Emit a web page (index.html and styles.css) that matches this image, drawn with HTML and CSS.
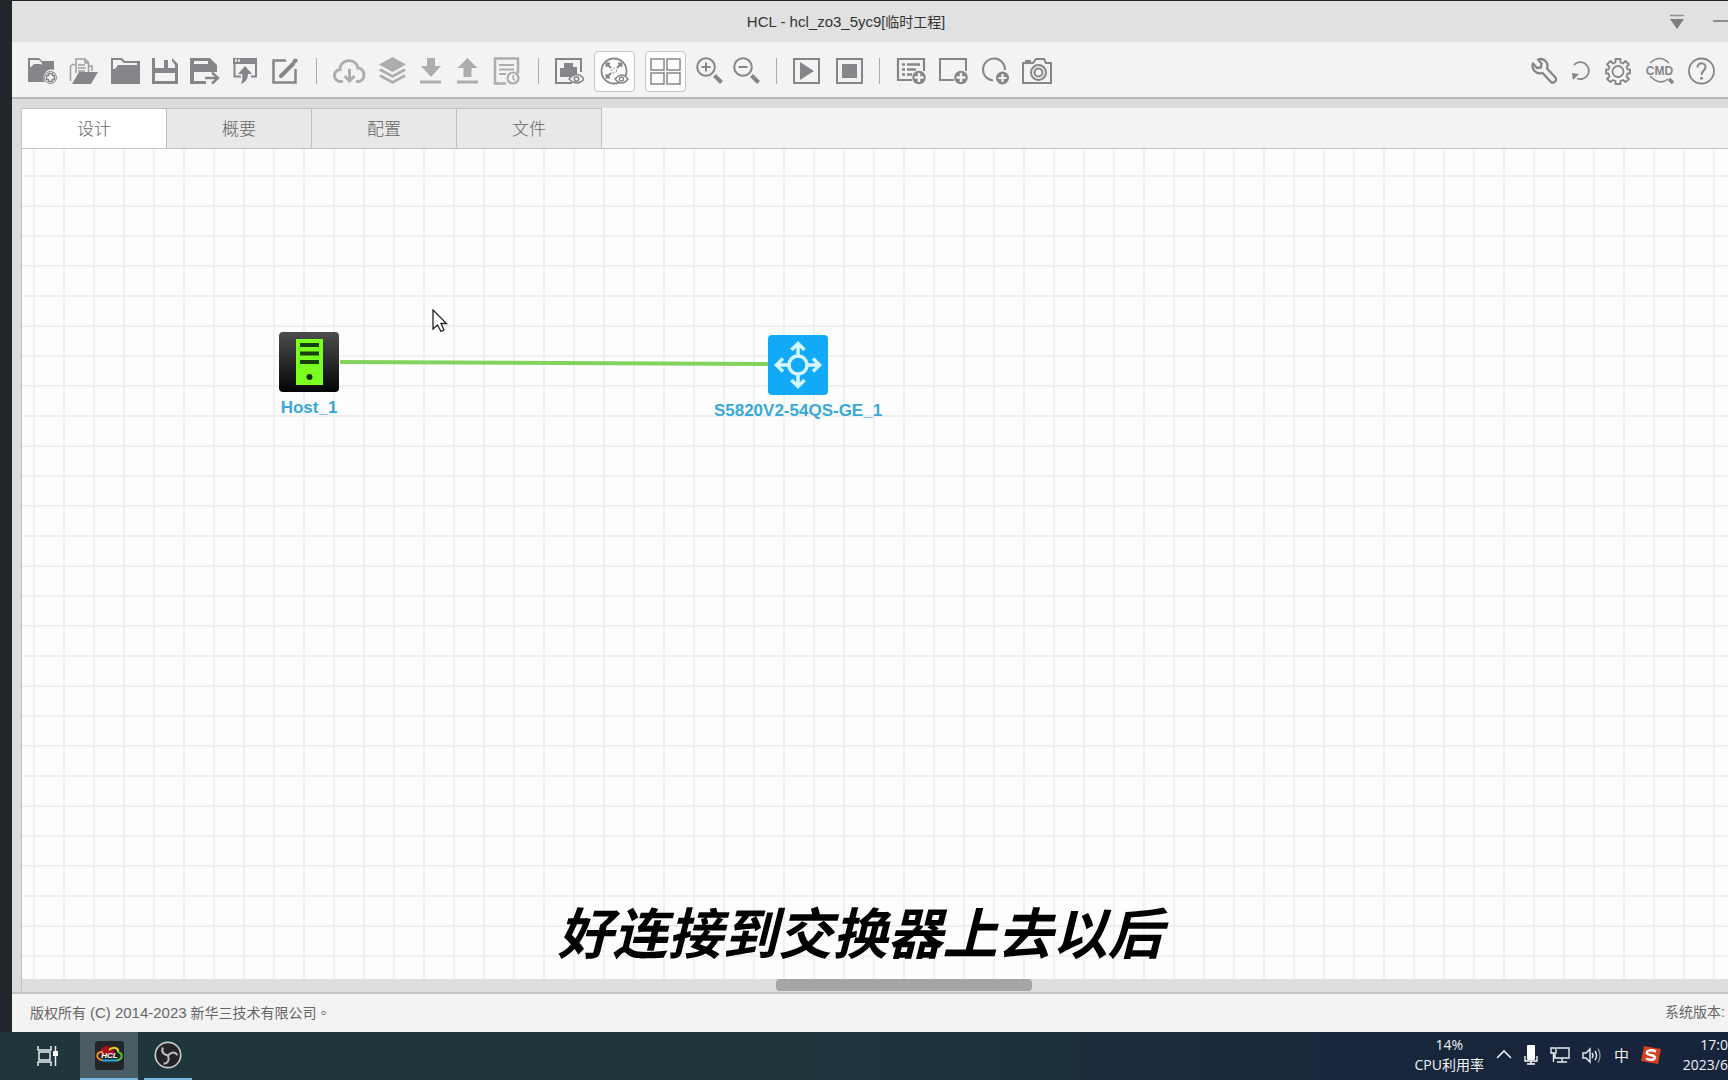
FILE: index.html
```html
<!DOCTYPE html>
<html lang="zh-CN">
<head>
<meta charset="utf-8">
<title>HCL - hcl_zo3_5yc9[临时工程]</title>
<link rel="stylesheet" href="styles.css">
</head>
<body>
<div class="desktop">
<div class="window">
  <header class="titlebar">
    <h1 class="title">HCL - hcl_zo3_5yc9<span class="cjk">[临时工程]</span></h1>
    <div class="window-controls">
      <button aria-label="菜单"><svg width="16" height="16"><path d="M1 1.5h14" stroke="#929397" stroke-width="1.5"/><path d="M1 5h14L8 15z" fill="#7c7d82"/></svg></button>
      <button aria-label="最小化"><svg width="15" height="16"><path d="M0 7h15" stroke="#8c8d90" stroke-width="2"/></svg></button>
    </div>
  </header>

  <div class="toolbar">
    <div class="group g-file">
      <button aria-label="新建工程"><svg width="29" height="28"><path fill="currentColor" d="M0 1h11l3 3h12v9a8 8 0 0 0-9 12H0z"/><path d="M2 7V3h9l3 3v1.500l-2-.5H6L3 10H2z" fill="#f3f3f3"/><circle cx="22.500" cy="20.500" r="6" fill="#f3f3f3" stroke="currentColor"/><path d="M20.500 16.500h4v2h2v4h-2v2h-4v-2h-2v-4h2z" fill="none" stroke="currentColor" stroke-width="1.500"/></svg></button>
      <button aria-label="打开工程"><svg width="30" height="28"><path d="M1.500 24V9l2-1.500H6M7 16V2h9l3.500 3.500V15M16 2v4h3.500M20 9h3v5M9 8h7M9 11h8M9 14h7" fill="none" stroke="#9b9da1" stroke-width="1.500"/><path d="M10 15h19l-7 12H3z" fill="currentColor"/></svg></button>
      <button aria-label="工程列表"><svg width="29" height="28"><path fill="currentColor" d="M0 1h11l3 3h15v23H0z"/><path d="M2 12V3h8l3 3h13v2H7l-3 4z" fill="#f3f3f3"/></svg></button>
      <button aria-label="保存"><svg width="26" height="28"><path fill="currentColor" fill-rule="evenodd" d="M0 1h3v12h20V8l-3-4V1l6 6v20H0zM3 16v8h20v-8z"/><path fill="currentColor" d="M12 3h4v8h-4zM3 11h20v3H3z"/></svg></button>
      <button aria-label="另存为"><svg width="30" height="28"><path fill="currentColor" fill-rule="evenodd" d="M0 1h20l7 7v7H4v9h12v3H0zM4 4v3h14V4z"/><path d="M15 21h12M22 15.500l6 5.500-6 5.500" fill="none" stroke="currentColor" stroke-width="2.500"/></svg></button>
      <button aria-label="导出"><svg width="27" height="28"><path d="M2.500 6v13.500H9M19 19.500h5V6" fill="none" stroke="currentColor" stroke-width="2"/><path fill="currentColor" d="M1 1h24v6H1zM13 9l7 8h-4c0 6-3 8-7 10 1-3 2-6 1-10H6z"/><path d="M4 2v3M7 2v3" stroke="#f3f3f3" stroke-width="1.500"/></svg></button>
      <button aria-label="编辑"><svg width="27" height="28"><path d="M15 3.500H2.500v22h22V12" fill="none" stroke="currentColor" stroke-width="2.500"/><path d="M10 19L22 7" stroke="currentColor" stroke-width="4" stroke-linecap="round"/><path d="M23.500 4.500l1-1" stroke="currentColor" stroke-width="4" stroke-linecap="round"/></svg></button>
    </div>
    <span class="sep"></span>
    <div class="group g-cloud">
      <button aria-label="云端下载"><svg width="33" height="28"><path d="M10 24.500H8a6 6 0 0 1-1-12C7 2 22 0 25 11c8 1 8 13 0 13.500h-2" fill="none" stroke="currentColor" stroke-width="3"/><path d="M16.500 12v12M11.500 19l5 5 5-5" fill="none" stroke="currentColor" stroke-width="3"/></svg></button>
      <button aria-label="图层"><svg width="27" height="28"><path d="M13.500 0L27 7.500 13.500 15 0 7.500z" fill="currentColor"/><path d="M1 12.500l12.500 7 12.500-7M1 18.500l12.500 7 12.500-7" fill="none" stroke="currentColor" stroke-width="2.800"/></svg></button>
      <button aria-label="导入"><svg width="24" height="28"><path d="M8 1h8v8h6l-10 11L2 9h6z" fill="currentColor"/><path d="M1 25h21" stroke="currentColor" stroke-width="3"/></svg></button>
      <button aria-label="上传"><svg width="24" height="28"><path d="M11.500 1l10 10h-6v9h-8v-9h-6z" fill="currentColor"/><path d="M1 25h21" stroke="currentColor" stroke-width="3"/></svg></button>
      <button aria-label="日志"><svg width="27" height="28"><path d="M13 26.500H2v-25h23v15" fill="none" stroke="currentColor" stroke-width="2.500"/><path d="M6 8h15M6 12.500h15M6 17h7" stroke="currentColor" stroke-width="2"/><circle cx="20" cy="21" r="5.500" fill="#f3f3f3" stroke="currentColor" stroke-width="2.200"/><path d="M20 18v3.500l2 2" fill="none" stroke="currentColor" stroke-width="1.500"/></svg></button>
    </div>
    <span class="sep"></span>
    <div class="group g-view">
      <button aria-label="显示接口"><svg width="29" height="28"><path d="M26 15V2H1v24h16" fill="none" stroke="currentColor" stroke-width="2"/><path d="M9 6h9v4h4v8l-6 2H5V11h4z" fill="currentColor"/><path d="M14 22q8-9 15 0q-7 8-15 0z" fill="#f3f3f3" stroke="currentColor" stroke-width="1.600"/><circle cx="21.500" cy="22" r="2.200" fill="none" stroke="currentColor" stroke-width="1.500"/></svg></button>
      <button class="toggle" aria-label="显示设备"><svg width="29" height="28"><circle cx="14" cy="14" r="12.500" fill="none" stroke="currentColor" stroke-width="1.800"/><path d="M11 11L7 7M17 11l4-4M11 16l-4 4M6.500 10V6.500H10M18 6.500h3.500V10M6.500 17v3.500H10" fill="none" stroke="currentColor" stroke-width="1.800"/><circle cx="14" cy="13.500" r="2.500" fill="none" stroke="currentColor" stroke-dasharray="2 1.500"/><path d="M15 22q7-8 13 0q-6 8-13 0z" fill="#fff" stroke="currentColor" stroke-width="1.500"/><circle cx="21.500" cy="22" r="2" fill="none" stroke="currentColor" stroke-width="1.300"/></svg></button>
      <button class="toggle" aria-label="显示网格"><svg width="31" height="28"><path d="M1 2h13v11H1zM17 2h13v11H17zM1 16h13v11H1zM17 16h13v11H17z" fill="none" stroke="currentColor" stroke-width="1.500"/></svg></button>
      <button aria-label="放大"><svg width="27" height="28"><circle cx="10" cy="10" r="8.800" fill="none" stroke="currentColor" stroke-width="2"/><path d="M5.500 10h9M10 5.500v9" stroke="currentColor" stroke-width="2"/><path d="M18.500 18.500l7 7" stroke="currentColor" stroke-width="4"/></svg></button>
      <button aria-label="缩小"><svg width="27" height="28"><circle cx="10" cy="10" r="8.800" fill="none" stroke="currentColor" stroke-width="2"/><path d="M5.500 10h9" stroke="currentColor" stroke-width="2"/><path d="M18.500 18.500l7 7" stroke="currentColor" stroke-width="4"/></svg></button>
    </div>
    <span class="sep"></span>
    <div class="group g-run">
      <button aria-label="启动"><svg width="27" height="28"><path d="M1 2h25v24H1z" fill="none" stroke="currentColor" stroke-width="2"/><path d="M7 5l14 9-14 9z" fill="currentColor"/></svg></button>
      <button aria-label="停止"><svg width="27" height="28"><path d="M1 2h25v24H1z" fill="none" stroke="currentColor" stroke-width="2"/><path d="M6 7h15v14H6z" fill="currentColor"/></svg></button>
    </div>
    <span class="sep"></span>
    <div class="group g-file">
      <button aria-label="添加备注"><svg width="30" height="28"><path d="M16 23H2V2h26v12" fill="none" stroke="currentColor" stroke-width="2.200"/><path d="M6 7.500h3M6 12.500h3M6 17.500h3M11 7.500h13M11 12.500h9M11 17.500h5" stroke="currentColor" stroke-width="2.500"/><circle cx="23" cy="20.500" r="6.800" fill="currentColor"/><path d="M18.500 20.500h9M23 16v9" stroke="#f3f3f3" stroke-width="2.500"/></svg></button>
      <button aria-label="添加矩形"><svg width="30" height="28"><path d="M16 23H2V2h26v12" fill="none" stroke="currentColor" stroke-width="2"/><circle cx="23" cy="20.500" r="6.800" fill="currentColor"/><path d="M18.500 20.500h9M23 16v9" stroke="#f3f3f3" stroke-width="2.500"/></svg></button>
      <button aria-label="添加圆形"><svg width="30" height="28"><path d="M13 23.500A11 11 0 1 1 25 13" fill="none" stroke="currentColor" stroke-width="2"/><circle cx="22.500" cy="21" r="6.500" fill="currentColor"/><path d="M18.500 21h8M22.500 17v8" stroke="#f3f3f3" stroke-width="2.200"/></svg></button>
      <button aria-label="截图"><svg width="30" height="28"><path d="M1 26V6h10l3-4h8l2 4h5v20z" fill="none" stroke="currentColor" stroke-width="2"/><path d="M3 3h6v3H3z" fill="currentColor"/><circle cx="16.500" cy="15.500" r="7.500" fill="none" stroke="currentColor" stroke-width="2"/><circle cx="16.500" cy="15.500" r="4" fill="none" stroke="currentColor" stroke-width="2"/></svg></button>
    </div>
    <div class="group g-settings">
      <button aria-label="工具"><svg width="26" height="28"><path d="M7 2.500c6-2 11 3 9 9l8.500 9c2 3-2 6.500-4.500 4.500l-8.500-9C5 18 0 12 2 6.500l4 4.500 4-.5.500-4z" fill="none" stroke="currentColor" stroke-width="2.300" stroke-linejoin="round"/></svg></button>
      <button aria-label="刷新"><svg width="20" height="28"><path d="M3 8a8.500 8.500 0 1 1 3 13.500" fill="none" stroke="currentColor" stroke-width="1.800"/><path d="M1 16l7 1-6 6z" fill="currentColor"/></svg></button>
      <button aria-label="设置"><svg width="26" height="28"><path d="M10.500 2h5v3.500l2.500 1 2.500-2.500 3.500 3.500-2.500 2.500 1 2.500H25v4h-2.500l-1 3L24 22l-3.500 3-2.500-2-2.500 1v3h-5v-3L8 23l-2.500 2L2 22l2.500-2.500-1-3H1v-4h2.500l1-2.500L2 7.500 5.500 4 8 6.500l2.500-1z" fill="none" stroke="currentColor" stroke-width="1.800" stroke-linejoin="round"/><circle cx="13" cy="14.500" r="5.500" fill="none" stroke="currentColor" stroke-width="1.800"/></svg></button>
      <button aria-label="命令查询"><svg width="29" height="28"><path d="M5 6q9.500-9 19 0M5 19q9.500 10 18 3" fill="none" stroke="currentColor" stroke-width="1.600"/><text x="14.500" y="17.500" class="cmd">CMD</text><path d="M24 22l4 4" stroke="currentColor" stroke-width="3.500"/></svg></button>
      <button aria-label="帮助"><svg width="27" height="28"><circle cx="13.500" cy="14" r="12.500" fill="none" stroke="currentColor" stroke-width="1.800"/><path d="M9.500 10.500c0-6 8.500-5.500 8 0-.5 3-4 3.500-4 7.500" fill="none" stroke="currentColor" stroke-width="2"/><circle cx="13.500" cy="21.300" r="1.500" fill="currentColor"/></svg></button>
    </div>
  </div>

  <main class="workspace">
    <nav class="tabs">
      <button class="tab active">设计</button>
      <button class="tab">概要</button>
      <button class="tab">配置</button>
      <button class="tab">文件</button>
    </nav>
    <section class="canvas">
      <svg class="link"><path d="M318 213L746 215" stroke="#83d25b" stroke-width="4"/></svg>
      <figure class="node host">
        <svg width="60" height="60"><defs><linearGradient id="metal" x2="0" y2="1"><stop stop-color="#4d4d4d"/><stop offset=".5" stop-color="#292929"/><stop offset="1" stop-color="#050505"/></linearGradient></defs><rect width="60" height="60" rx="4" fill="url(#metal)"/><path d="M17 7h27v46H17z" fill="#7bff20"/><path d="M21 13h19M21 21.500h19M21 30h19" stroke="#173f08" stroke-width="4"/><circle cx="30.500" cy="45" r="3" fill="#102b08"/></svg>
        <figcaption>Host_1</figcaption>
      </figure>
      <figure class="node switch">
        <svg width="60" height="60"><rect width="60" height="60" rx="4" fill="#12aaf6"/><g fill="none" stroke="#d5f5ff" stroke-width="3.500"><circle cx="30" cy="30" r="9"/><path d="M30 21V8M23.500 15L30 8.500l6.500 6.500M30 39v13M23.500 45l6.500 6.500 6.500-6.500M21 30H8M15 23.500L8.500 30l6.500 6.500M39 30h13M45 23.500l6.500 6.500-6.500 6.500"/></g></svg>
        <figcaption>S5820V2-54QS-GE_1</figcaption>
      </figure>
      <svg class="pointer" width="17" height="26"><path d="M1 1v19l4.500-4 3.500 6.500 3-1.500-3-6.500h5.500z" fill="#fff" stroke="#222" stroke-width="1.300"/></svg>
    </section>
    <div class="scroll-track"><div class="scroll-thumb"></div></div>
  </main>

  <footer class="statusbar">
    <span>版权所有 <span class="latin">(C) 2014-2023</span> 新华三技术有限公司<span lang="zh-TW" class="stop">。</span></span>
    <span>系统版本:</span>
  </footer>
</div>

<p class="caption">好连接到交换器上去以后</p>

<div class="taskbar">
  <button class="task view" aria-label="任务视图"><svg width="22" height="20"><path d="M1 0v4h13V0M1 20v-4h13v4M2 6h11v8H2zM18.500 0v20" fill="none" stroke="#e8eef0" stroke-width="1.500"/><path d="M16 5h5v5h-5z" fill="#fff"/></svg></button>
  <button class="task current" aria-label="HCL"><svg width="29" height="29"><rect width="29" height="29" rx="3" fill="#222629"/><path d="M5 9Q12 1 19 9v5H7z" fill="#a51120"/><path d="M14 9c4-4 10-2 9 2" fill="none" stroke="#e8d21c" stroke-width="2"/><path d="M7 19c-7-1-6-9 1-8" fill="none" stroke="#f08a24" stroke-width="2"/><path d="M23 11c6 2 4 8-1 8" fill="none" stroke="#55c42c" stroke-width="2"/><path d="M7 19.500h16" stroke="#29a9df" stroke-width="2"/><text x="14.500" y="17" class="logo">HCL</text></svg></button>
  <button class="task obs" aria-label="OBS"><svg width="28" height="28"><circle cx="14" cy="14" r="12.700" fill="#242428" stroke="#c8c9cb" stroke-width="1.700"/><g fill="none" stroke="#bfc0c5" stroke-width="2"><path d="M14 14.500c-5-1-7-4-5-8"/><path d="M14 14.500c-5-1-7-4-5-8" transform="rotate(120 14 14.500)"/><path d="M14 14.500c-5-1-7-4-5-8" transform="rotate(240 14 14.500)"/></g></svg></button>
  <div class="tray">
    <div class="cpu"><span>14%</span><span>CPU利用率</span></div>
    <button aria-label="显示隐藏图标"><svg width="16" height="20"><path d="M1 13l7-7 7 7" fill="none" stroke="#e8edf1" stroke-width="1.600"/></svg></button>
    <button aria-label="麦克风"><svg width="14" height="20"><rect x="3" width="8" height="15" rx="1" fill="#fff"/><path d="M1 11v5h12v-5M7 16v3M3 19h8" fill="none" stroke="#fff" stroke-width="1.300"/></svg></button>
    <button aria-label="网络"><svg width="20" height="20"><path d="M7 3h12v10H5V9M12 13v4M7 17h10M1 3h5v5H1zM3.500 8v9" fill="none" stroke="#e8edf1" stroke-width="1.400"/></svg></button>
    <button aria-label="音量"><svg width="20" height="20"><path d="M1 8h3l4-4v13l-4-4H1zM10 8q2 2.500 0 5M13 6q3 4.500 0 9" fill="none" stroke="#e8edf1" stroke-width="1.400"/><path d="M16 3.500q4 7 0 14" fill="none" stroke="#8794a1" stroke-width="1.400"/></svg></button>
    <button class="ime">中</button>
    <button aria-label="搜狗输入法"><svg width="20" height="20"><path d="M3 1l17 3-3 15-17-3z" fill="#d3411f"/><path d="M15 6.500C9 4 5 6 6 8.500c1 2 8 1 8 4 0 2.500-5 3-9 1" fill="none" stroke="#fff" stroke-width="2.500"/></svg></button>
    <div class="clock"><span>17:0</span><span>2023/6</span></div>
  </div>
</div>
</div>
</body>
</html>
```
FILE: styles.css
```css
* { box-sizing: border-box; }

body {
  margin: 0;
  font-family: "Liberation Sans", "Noto Sans CJK SC", sans-serif;
  color: #666;
  overflow: hidden;
}

button {
  padding: 0;
  border: 0;
  background: none;
  color: inherit;
  font: inherit;
  flex: none;
}

svg { display: block; flex: none; }

.desktop {
  position: relative;
  min-height: 100vh;
  display: flex;
  flex-direction: column;
  background: #20262b;
}

.window {
  flex: 1;
  display: flex;
  flex-direction: column;
  margin: 1px 0 0 12px;
  background: #f3f3f3;
}

.titlebar {
  display: grid;
  grid-template-columns: 1fr auto 1fr;
  align-items: center;
  height: 41px;
  background: #e1e1e1;
}

.title {
  grid-column: 2;
  margin: 0 48px 0 0;
  font-size: 15px;
  line-height: 24px;
  font-weight: 400;
  color: #333;
}

.cjk { font-size: 14px; }

.window-controls {
  display: flex;
  justify-content: flex-end;
  gap: 28px;
}

.toolbar {
  display: flex;
  align-items: center;
  height: 57px;
  padding: 3px 13px 0 16px;
  border-bottom: 2px solid #b8b8b8;
  color: #85868a;
}

.group { display: flex; align-items: center; gap: 12px; }
.g-cloud { gap: 13px; color: #adadad; }
.g-view { gap: 10px; }
.g-run { gap: 16px; }
.g-settings { gap: 14px; margin-left: auto; }

.sep {
  width: 1px;
  height: 26px;
  margin: 0 16px;
  background: #adadad;
}

.g-file + .sep { margin-left: 18px; }
.g-cloud + .sep { margin-left: 18px; }

.toggle {
  display: grid;
  place-items: center;
  width: 41px;
  height: 41px;
  border: 1px solid #c4c4c4;
  border-radius: 4px;
  background: #fdfdfd;
}

.cmd {
  font-size: 12px;
  font-weight: 700;
  text-anchor: middle;
  fill: currentColor;
}

.workspace {
  flex: 1;
  display: flex;
  flex-direction: column;
  padding: 9px 0 0 9px;
  border-bottom: 2px solid #c4c4c6;
  background: #dcdcdf;
}

.tabs {
  display: flex;
  height: 41px;
  border-bottom: 1px solid #c4c4c4;
  border-left: 1px solid #c4c4c4;
  background: #f3f3f3;
}

.tab {
  width: 145px;
  padding-bottom: 2px;
  border-top: 1px solid #c0c0c0;
  border-right: 1px solid #c0c0c0;
  background: #e8e8e8;
  font-size: 17px;
  font-weight: 300;
}

.tab.active { background: #fff; }

.canvas {
  position: relative;
  flex: 1;
  border-left: 1px solid #c4c4c4;
  background-color: #fdfdfd;
  background-image:
    linear-gradient(90deg, #f0f0f1 2px, transparent 2px),
    linear-gradient(#f0f0f1 2px, transparent 2px);
  background-size: 30px 30px;
  background-position: 11px 26px;
}

.link {
  position: absolute;
  inset: 0;
  width: 100%;
  height: 100%;
}

.node {
  position: absolute;
  display: flex;
  flex-direction: column;
  align-items: center;
  gap: 6px;
  width: 180px;
  margin: 0;
  font-size: 17px;
  line-height: 20px;
  font-weight: 700;
  color: #38a8d8;
}

.host { left: 197px; top: 183px; }
.switch { left: 686px; top: 186px; }
.pointer { position: absolute; left: 410px; top: 160px; }

.scroll-track {
  height: 13px;
  border-left: 1px solid #c4c4c4;
  background: #dedede;
}

.scroll-thumb {
  width: 15%;
  height: 12px;
  margin-left: 44.2%;
  border-radius: 4px;
  background: #a5a5a5;
}

.statusbar {
  display: flex;
  align-items: center;
  justify-content: space-between;
  height: 38px;
  padding: 0 3px 2px 18px;
  font-size: 14px;
  line-height: 20px;
  white-space: nowrap;
}

.latin { font-size: 15px; }
.stop { font-family: "Noto Sans CJK TC", sans-serif; }

.caption {
  position: absolute;
  left: 0;
  right: 8px;
  bottom: 118px;
  margin: 0;
  text-align: center;
  font-family: "Noto Sans CJK SC", sans-serif;
  font-size: 55px;
  line-height: 64px;
  font-weight: 700;
  font-style: italic;
  color: #000;
}

.taskbar {
  display: flex;
  height: 48px;
  padding-left: 16px;
  background: linear-gradient(90deg, #20363d, #20363d 45%, #18263b 80%, #17233b);
  color: #eef2f5;
}

.task {
  display: grid;
  place-items: center;
  width: 58px;
}

.view { width: 64px; }
.current { background: #4b5d64; border-bottom: 2px solid #78b7e2; }
.obs { width: 48px; margin-left: 6px; border-bottom: 2px solid #78b7e2; }

.logo {
  font-size: 8px;
  font-weight: 700;
  font-style: italic;
  text-anchor: middle;
  fill: #fff;
}

.tray {
  display: flex;
  align-items: center;
  gap: 12px;
  margin-left: auto;
  padding-bottom: 2px;
  font-family: "Open Sans", "Noto Sans CJK SC", sans-serif;
  font-size: 14px;
  line-height: 20px;
}

.cpu, .clock {
  display: flex;
  flex-direction: column;
  align-items: center;
  white-space: nowrap;
}

.ime { font-size: 15px; }

.clock {
  align-items: flex-end;
  width: 47px;
  margin-left: 8px;
}
```
